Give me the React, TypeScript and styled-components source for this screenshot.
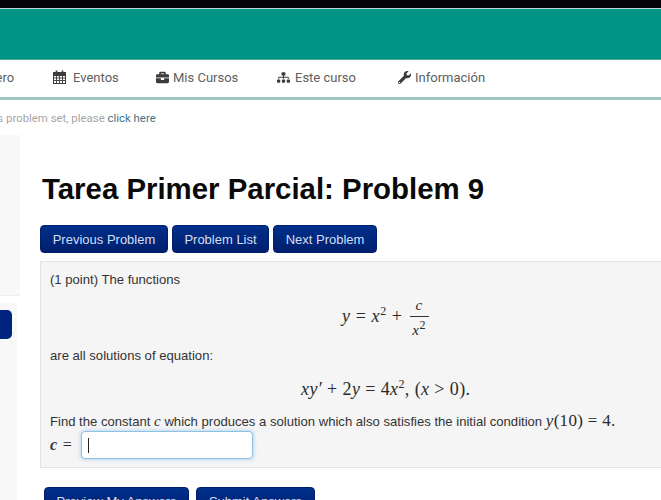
import React from "react";
import styled, { createGlobalStyle } from "styled-components";
import { FaBriefcase, FaSitemap, FaWrench } from "react-icons/fa";

const Global = createGlobalStyle`
  html, body {
    margin: 0;
    padding: 0;
    width: 661px;
    height: 500px;
    overflow: hidden;
    background: #fff;
  }
  * { box-sizing: border-box; }
`;

const Page = styled.div`
  width: 661px;
  height: 500px;
  overflow: hidden;
  font-family: "Liberation Sans", Arial, sans-serif;
`;

const TopStrip = styled.div`
  height: 9px;
  background: #040306;
  border-bottom: 1px solid #b7ddd6;
`;

const Banner = styled.div`
  height: 51px;
  background: #009484;
  border-bottom: 1px solid #4fa99d;
`;

const Nav = styled.nav`
  height: 40px;
  display: flex;
  align-items: center;
  background: #fff;
  border-bottom: 3px solid #9fc6c0;
  font-family: Roboto, sans-serif;
  font-size: 13px;
  color: #606060;
  white-space: nowrap;
  padding-bottom: 3px;
`;

const NavItem = styled.a<{ $width: number; $gap?: number }>`
  display: flex;
  align-items: center;
  gap: ${(p) => p.$gap ?? 4}px;
  flex: 0 0 ${(p) => p.$width}px;
  svg { color: #3c3c3c; font-size: 13px; flex: none; }
`;

const FirstItem = styled(NavItem)`
  margin-left: -29px;
`;

const Notice = styled.div`
  height: 35px;
  padding-top: 12px;
  margin-left: -122px;
  font-family: Roboto, sans-serif;
  font-size: 11.4px;
  line-height: 13px;
  color: #a6a6a6;
  white-space: nowrap;
`;

const NoticeLink = styled.a`
  color: #3f7487;
`;

const Columns = styled.div`
  display: flex;
`;

const Side = styled.aside`
  flex: 0 0 40px;
  display: flex;
  flex-direction: column;
  gap: 7px;
`;

const SideCard = styled.div`
  width: 20px;
  height: 161px;
  background: #f8f8f8;
  border-bottom: 1px solid #eeeeee;
`;

const SideMenu = styled.div`
  width: 17px;
  height: 200px;
  padding-top: 7px;
  background: #f8f8f8;
  border-radius: 0 4px 0 0;
`;

const SideButton = styled.div`
  width: 12px;
  height: 29px;
  background: #00247d;
  border-radius: 0 5px 5px 0;
`;

const Main = styled.main`
  flex: 0 0 660px;
`;

const Title = styled.h1`
  margin: 0 0 0 2px;
  padding-top: 37px;
  height: 90px;
  font-size: 29.4px;
  line-height: 34px;
  font-weight: 700;
  color: #0a0a0a;
`;

const ButtonRow = styled.div<{ $inset?: number; $gap: number }>`
  display: flex;
  gap: ${(p) => p.$gap}px;
  margin-left: ${(p) => p.$inset ?? 0}px;
`;

const NavyButton = styled.button<{ $width: number }>`
  width: ${(p) => p.$width}px;
  height: 28px;
  padding: 1px 0 0;
  border: 1px solid #001f6e;
  border-radius: 4px;
  background: linear-gradient(#00308a, #001e6e);
  color: #d3dff6;
  font-family: "Liberation Sans", Arial, sans-serif;
  font-size: 13px;
  text-align: center;
`;

const ProblemBox = styled.section`
  width: 640px;
  height: 207px;
  margin: 8px 0 19px;
  padding: 11px 9px 0;
  background: #f5f5f5;
  border: 1px solid #e3e3e3;
  font-size: 13.1px;
  line-height: 14px;
  color: #333;
`;

const Para = styled.p<{ $height: number }>`
  margin: 0;
  height: ${(p) => p.$height}px;
  white-space: nowrap;
`;

const Display = styled.div<{ $height: number; $left: number }>`
  display: flex;
  align-items: center;
  height: ${(p) => p.$height}px;
  padding-left: ${(p) => p.$left}px;
`;

const MathText = styled.span<{ $size?: number; $spread?: number }>`
  font-family: "Liberation Serif", "DejaVu Serif", serif;
  font-size: ${(p) => p.$size ?? 18}px;
  letter-spacing: ${(p) => p.$spread ?? 0}px;
  color: #2a2a2a;
  white-space: pre;
`;

const Var = styled.i`
  font-weight: 700;
  color: #333;
`;

const Sup = styled.sup`
  font-size: 12px;
  line-height: 0;
`;

const Fraction = styled.span`
  display: inline-flex;
  flex-direction: column;
  align-items: center;
  vertical-align: middle;
  margin-left: 7px;
  min-width: 19px;
  line-height: 15px;
`;

const Numerator = styled.span`
  align-self: stretch;
  text-align: center;
  font-size: 15px;
  padding-bottom: 3px;
  border-bottom: 1px solid #333;
`;

const Denominator = styled.span`
  font-size: 15px;
  padding-top: 6px;
`;

const AnswerRow = styled.div`
  display: flex;
  align-items: center;
  gap: 8px;
  margin-top: 1px;
`;

const AnswerInput = styled.div`
  width: 172px;
  height: 28px;
  padding: 6px;
  background: #fff;
  border: 1px solid #8fc0e6;
  border-radius: 4px;
  box-shadow: 0 0 4px rgba(102, 175, 233, 0.6);
`;

const Caret = styled.div`
  width: 1px;
  height: 15px;
  background: #222;
`;

function CalendarIcon() {
  return (
    <svg width="13" height="14" viewBox="0 0 13 14" fill="none" stroke="currentColor">
      <rect x="0.5" y="2.5" width="12" height="11" fill="#fff" />
      <path d="M0.5 3h12v2.5H0.5z" fill="currentColor" />
      <path d="M3.5 0.5v3M9.5 0.5v3" strokeWidth="1.6" />
      <path d="M0.5 8h12M0.5 10.5h12M3.5 5.5v8M6.5 5.5v8M9.5 5.5v8" strokeWidth="0.9" />
    </svg>
  );
}

export default function App() {
  return (
    <Page>
      <Global />
      <TopStrip />
      <Banner />
      <Nav>
        <FirstItem $width={82}>Tablero</FirstItem>
        <NavItem $width={103} $gap={7}>
          <CalendarIcon />
          Eventos
        </NavItem>
        <NavItem $width={121}>
          <FaBriefcase />
          Mis Cursos
        </NavItem>
        <NavItem $width={121} $gap={5}>
          <FaSitemap />
          Este curso
        </NavItem>
        <NavItem $width={100}>
          <FaWrench />
          Información
        </NavItem>
      </Nav>
      <Notice>
        To get a hardcopy of this problem set, please <NoticeLink>click here</NoticeLink>
      </Notice>
      <Columns>
        <Side>
          <SideCard />
          <SideMenu>
            <SideButton />
          </SideMenu>
        </Side>
        <Main>
          <Title>Tarea Primer Parcial: Problem 9</Title>
          <ButtonRow $gap={4}>
            <NavyButton $width={128}>Previous Problem</NavyButton>
            <NavyButton $width={97}>Problem List</NavyButton>
            <NavyButton $width={104}>Next Problem</NavyButton>
          </ButtonRow>
          <ProblemBox>
            <Para $height={14}>(1 point) The functions</Para>
            <Display $height={62} $left={292}>
              <MathText $spread={0.6}>
                <i>y</i> = <i>x</i>
                <Sup>2</Sup> +
                <Fraction>
                  <Numerator><i>c</i></Numerator>
                  <Denominator><i>x</i><Sup>2</Sup></Denominator>
                </Fraction>
              </MathText>
            </Display>
            <Para $height={14}>are all solutions of equation:</Para>
            <Display $height={51} $left={251}>
              <MathText $spread={0.4}>
                <i>xy′</i> + 2<i>y</i> = 4<i>x</i>
                <Sup>2</Sup>, (<i>x</i> &gt; 0).
              </MathText>
            </Display>
            <Para $height={16}>
              Find the constant <MathText $size={15}><i>c</i></MathText> which produces a solution which also satisfies the
              initial condition <MathText $size={17} $spread={0.3}><i>y</i>(10) = 4.</MathText>
            </Para>
            <AnswerRow>
              <MathText $size={16} $spread={0.8}><Var>c</Var> =</MathText>
              <AnswerInput>
                <Caret />
              </AnswerInput>
            </AnswerRow>
          </ProblemBox>
          <ButtonRow $inset={4} $gap={7}>
            <NavyButton $width={145}>Preview My Answers</NavyButton>
            <NavyButton $width={119}>Submit Answers</NavyButton>
          </ButtonRow>
        </Main>
      </Columns>
    </Page>
  );
}
